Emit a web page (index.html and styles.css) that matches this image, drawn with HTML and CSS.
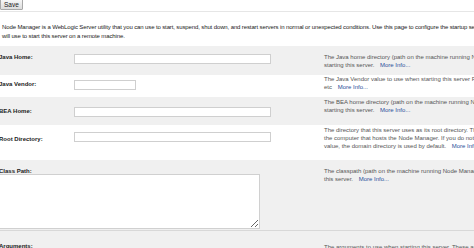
FILE: index.html
```html
<!DOCTYPE html>
<html lang="en">
<head>
  <meta charset="UTF-8" />
  <title>Server Start</title>
  <link rel="stylesheet" href="styles.css">
</head>
<body>

  <div class="page">
    <div class="toolbar">
      <button class="save-btn">Save</button>
    </div>

    <p class="intro">
      Node Manager is a WebLogic Server utility that you can use to start, suspend, shut down, and restart servers in normal or unexpected conditions. Use this page to configure the startup settings that Node Manager<br>
      will use to start this server on a remote machine.
    </p>

    <div class="form">
      <div class="row shade r-java-home">
        <label class="lbl">Java Home:</label>
        <div class="field"><input type="text" class="txt wide" /></div>
        <div class="desc">The Java home directory (path on the machine running Node Manager) to use when<br>starting this server. <a href="#">More Info...</a></div>
      </div>

      <div class="row r-vendor">
        <label class="lbl">Java Vendor:</label>
        <div class="field"><input type="text" class="txt short" /></div>
        <div class="desc">The Java Vendor value to use when starting this server For example, BEA, Sun, HP, IBM,<br>etc <a href="#">More Info...</a></div>
      </div>

      <div class="row shade r-bea">
        <label class="lbl">BEA Home:</label>
        <div class="field"><input type="text" class="txt wide" /></div>
        <div class="desc">The BEA home directory (path on the machine running Node Manager) to use when<br>starting this server. <a href="#">More Info...</a></div>
      </div>

      <div class="row r-root">
        <label class="lbl">Root Directory:</label>
        <div class="field"><input type="text" class="txt wide" /></div>
        <div class="desc">The directory that this server uses as its root directory. This directory must be on<br>the computer that hosts the Node Manager. If you do not specify a Root Directory<br>value, the domain directory is used by default. <a href="#">More Info...</a></div>
      </div>

      <div class="row shade r-class">
        <label class="lbl">Class Path:</label>
        <div class="desc">The classpath (path on the machine running Node Manager) to use when starting<br>this server. <a href="#">More Info...</a></div>
        <textarea class="area"></textarea>
      </div>

      <div class="row shade r-args">
        <label class="lbl">Arguments:</label>
        <div class="field"></div>
        <div class="desc">The arguments to use when starting this server. These are the first arguments appended <a href="#">More Info...</a></div>
      </div>
    </div>
  </div>

</body>
</html>
```

FILE: styles.css
```css
body {
  margin: 0;
  padding: 0;
  background: #fff;
  font-family: "Liberation Sans", Arial, sans-serif;
  font-size: 6px;
  color: #333;
  overflow: hidden;
}

.page {
  width: 600px;
  margin-left: -2px;
}

.toolbar {
  height: 13px;
  border-bottom: 1px solid #e6e6e6;
  padding-left: 2px;
}

.save-btn {
  display: block;
  margin-top: -2px;
  height: 12px;
  padding: 0 3px;
  font-family: inherit;
  font-size: 6.5px;
  color: #222;
  background: linear-gradient(#fafafa, #dcdcdc);
  border: 1px solid #a8a8a8;
  border-radius: 1px;
}

.intro {
  margin: 0;
  padding: 11px 0 0 4px;
  height: 23px;
  line-height: 9px;
  width: 476px;
  white-space: nowrap;
  overflow: hidden;
  color: #222;
  letter-spacing: -0.12px;
}

.form {
  display: flex;
  flex-direction: column;
}

.row {
  display: grid;
  grid-template-columns: 76px 250px 260px;
  background: #fff;
}

.row.shade {
  background: #f0f0f0;
}

.lbl {
  font-weight: bold;
  color: #222;
  padding-left: 1px;
}

.txt {
  box-sizing: border-box;
  height: 10px;
  border: 1px solid #cfcfcf;
  background: #fff;
  padding: 0;
  margin: 0;
  display: block;
}

.txt.wide {
  width: 197px;
}

.txt.short {
  width: 62px;
}

.desc {
  line-height: 8px;
  color: #555;
  white-space: nowrap;
}

.desc a {
  color: #2a4f9a;
  text-decoration: none;
  margin-left: 4px;
}

/* row geometry */
.r-java-home { height: 29px; }
.r-java-home .lbl { padding-top: 8px; }
.r-java-home .field { padding-top: 8px; }
.r-java-home .desc { padding-top: 7px; }

.r-vendor { height: 22px; }
.r-vendor .lbl { padding-top: 6px; }
.r-vendor .field { padding-top: 5px; }
.r-vendor .desc { padding-top: 0; }

.r-bea { height: 28px; }
.r-bea .lbl { padding-top: 11px; }
.r-bea .field { padding-top: 10px; }
.r-bea .desc { padding-top: 1px; }

.r-root { height: 35px; }
.r-root .lbl { padding-top: 11px; }
.r-root .field { padding-top: 7px; }
.r-root .desc { padding-top: 1px; }

/* textarea rows put the label above the box */
.r-class {
  height: 70px;
  grid-template-columns: 262px 64px 260px;
  grid-template-rows: 14px 1fr;
}
.r-class .lbl {
  grid-column: 1 / 3;
  padding-top: 8px;
}
.r-class .desc {
  grid-column: 3;
  grid-row: 1 / 3;
  padding-top: 7px;
}
.r-class .area {
  grid-column: 1;
  grid-row: 2;
}

.area {
  display: block;
  box-sizing: border-box;
  width: 262px;
  height: 55px;
  border: 1px solid #d0d0d0;
  background: #fff;
  resize: both;
  margin: 0;
}

.r-args {
  border-top: 1px solid #d8d8d8;
  height: 40px;
  background: linear-gradient(#f0f0f0 6px, #fff 6px);
}
.r-args .lbl { padding-top: 12px; }
.r-args .desc { padding-top: 12px; }
```
